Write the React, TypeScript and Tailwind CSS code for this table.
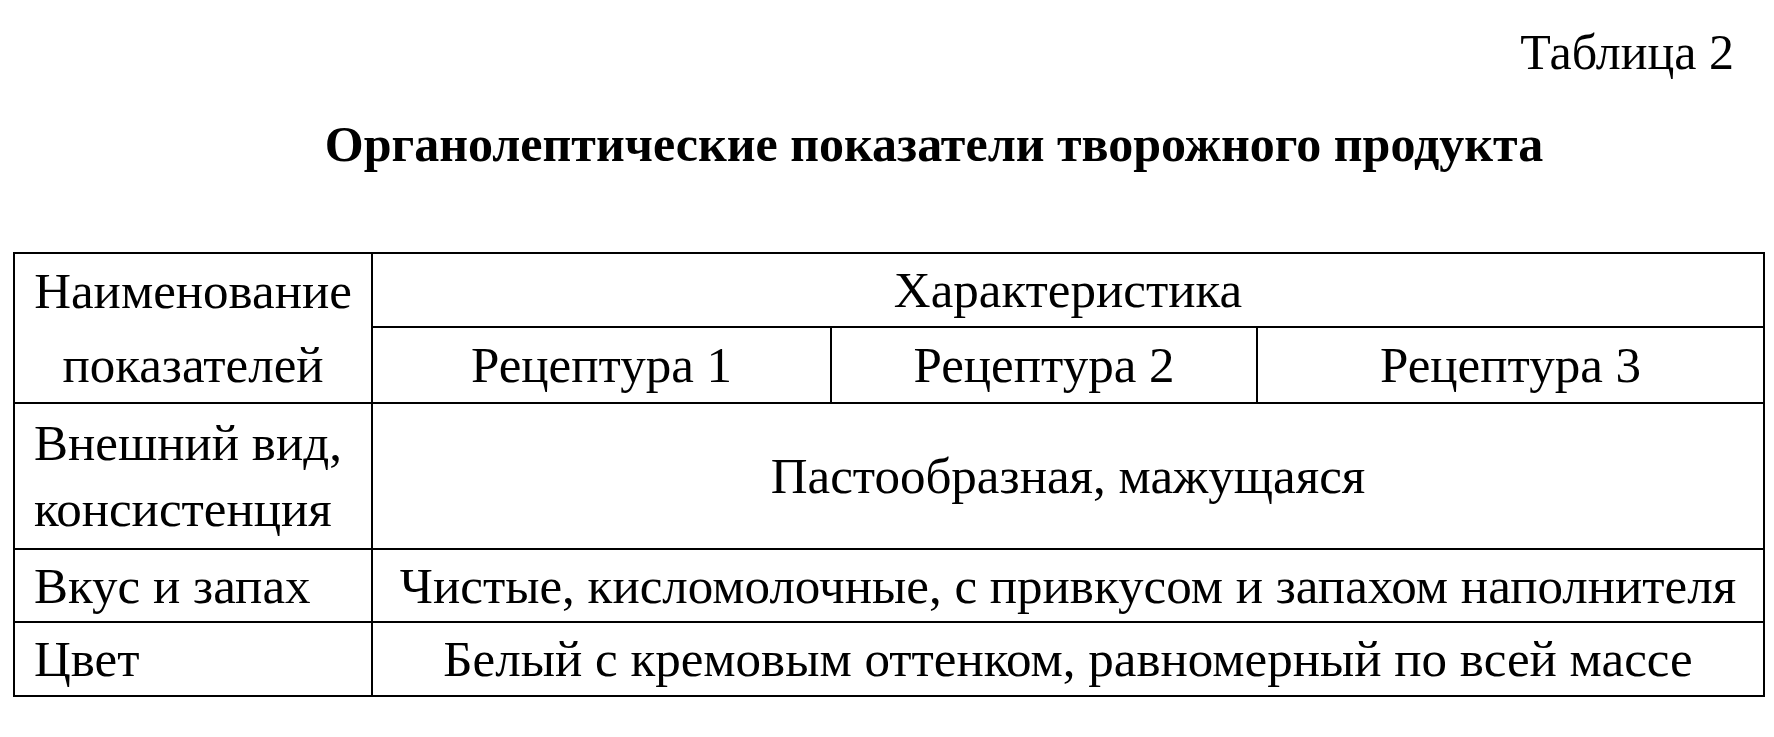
import React from "react";

const rows = [
  { name: ["Внешний вид,", "консистенция"], value: "Пастообразная, мажущаяся", h: "h-[146px]" },
  { name: ["Вкус и запах"], value: "Чистые, кисломолочные, с привкусом и запахом наполнителя", h: "h-[73px]" },
  { name: ["Цвет"], value: "Белый с кремовым оттенком, равномерный по всей массе", h: "h-[74px]" },
];

const App = () => {
  return (
    <div
      className="w-[1774px] h-[737px] bg-white text-black overflow-hidden"
      style={{ fontFamily: '"Liberation Serif", "Times New Roman", serif' }}
    >
      <div className="flex justify-end pr-[40px] pt-[22px] text-[50px] leading-[60px]">Таблица 2</div>

      <h1 className="pl-[94px] mt-[32px] text-center text-[50px] leading-[60px] font-bold">
        Органолептические показатели творожного продукта
      </h1>

      <table className="ml-[13px] mt-[78px] w-[1750px] table-fixed border-collapse text-[51px]">
        <colgroup>
          <col className="w-[358px]" />
          <col className="w-[459px]" />
          <col className="w-[426px]" />
          <col className="w-[507px]" />
        </colgroup>
        <thead>
          <tr className="h-[72px]">
            <th rowSpan={2} className="border-2 border-black font-normal text-center leading-[74px] align-middle p-0">
              Наименование
              <br />
              показателей
            </th>
            <th colSpan={3} className="border-2 border-black font-normal text-center leading-[60px] p-0">
              Характеристика
            </th>
          </tr>
          <tr className="h-[73px]">
            <th className="border-2 border-black font-normal text-center leading-[60px] p-0">Рецептура 1</th>
            <th className="border-2 border-black font-normal text-center leading-[60px] p-0">Рецептура 2</th>
            <th className="border-2 border-black font-normal text-center leading-[60px] p-0">Рецептура 3</th>
          </tr>
        </thead>
        <tbody>
          {rows.map((r) => (
            <tr key={r.value} className={r.h}>
              <td className="border-2 border-black pl-[19px] pr-0 py-0 leading-[66px] align-middle">
                {r.name.map((line, i) => (
                  <div key={i}>{line}</div>
                ))}
              </td>
              <td colSpan={3} className="border-2 border-black p-0 text-center leading-[60px] align-middle whitespace-nowrap">
                {r.value}
              </td>
            </tr>
          ))}
        </tbody>
      </table>
    </div>
  );
};

export default App;
